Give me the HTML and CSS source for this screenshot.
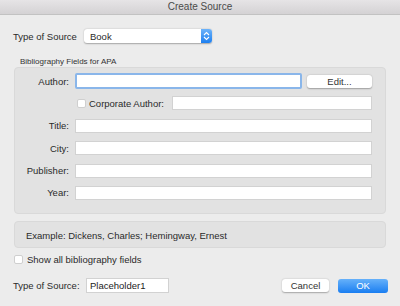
FILE: index.html
```html
<!DOCTYPE html>
<html lang="en">
<head>
    <meta charset="UTF-8">
    <title>Create Source</title>
    <link rel="stylesheet" href="styles.css">
</head>
<body>
    <div class="window">
        <header class="titlebar">Create Source</header>
        <main class="content">
            <div class="type-row">
                <label class="type-label">Type of Source</label>
                <div class="select">
                    <span>Book</span>
                    <span class="stepper">
                        <svg width="7" height="10" viewBox="0 0 7 10">
                            <path d="M1 4 L3.5 1.5 L6 4 M1 6 L3.5 8.5 L6 6" fill="none" stroke="#fff" stroke-width="1.1"/>
                        </svg>
                    </span>
                </div>
            </div>

            <div class="group-title">Bibliography Fields for APA</div>
            <div class="group">
                <label class="field-label">Author:</label>
                <div class="author-row">
                    <input type="text" class="field focused">
                    <button class="btn edit-btn">Edit...</button>
                </div>

                <span></span>
                <div class="corp-row">
                    <span class="checkbox"></span>
                    <span class="corp-label">Corporate Author:</span>
                    <input type="text" class="field">
                </div>

                <label class="field-label">Title:</label>
                <input type="text" class="field">

                <label class="field-label">City:</label>
                <input type="text" class="field">

                <label class="field-label">Publisher:</label>
                <input type="text" class="field">

                <label class="field-label">Year:</label>
                <input type="text" class="field">
            </div>

            <div class="example">Example: Dickens, Charles; Hemingway, Ernest</div>

            <div class="show-all">
                <span class="checkbox"></span>
                <span>Show all bibliography fields</span>
            </div>

            <footer class="bottom-row">
                <label class="tag-label">Type of Source:</label>
                <input type="text" class="field tag-input" value="Placeholder1">
                <span class="spacer"></span>
                <button class="btn cancel-btn">Cancel</button>
                <button class="btn ok-btn">OK</button>
            </footer>
        </main>
    </div>
</body>
</html>
```

FILE: styles.css
```css
body {
    margin: 0;
    background-color: #ececec;
    font-family: "Liberation Sans", Arial, sans-serif;
    font-size: 9.5px;
    color: #2a2a2a;
}
.window {
    width: 400px;
    height: 306px;
    overflow: hidden;
    background-color: #ececec;
}
.titlebar {
    height: 15px;
    line-height: 14px;
    text-align: center;
    font-size: 10px;
    color: #4a4a4a;
    background: linear-gradient(#e6e4e6, #d4d2d4);
    border-bottom: 1px solid #c2c2c2;
    box-sizing: border-box;
}
.content {
    padding: 0 13px 0 13px;
}
.type-row {
    display: flex;
    align-items: center;
    margin-top: 14px;
    height: 14px;
}
.type-label {
    width: 71px;
}
.select {
    width: 128px;
    height: 14px;
    background-color: #fff;
    border-radius: 3px;
    box-shadow: 0 0.5px 1.5px rgba(0, 0, 0, 0.3);
    display: flex;
    align-items: center;
    justify-content: space-between;
    padding-left: 6px;
    box-sizing: border-box;
}
.stepper {
    width: 11px;
    height: 14px;
    background: linear-gradient(#6cb3fa, #1d7ff0);
    border-radius: 0 3px 3px 0;
    display: flex;
    align-items: center;
    justify-content: center;
}
.group-title {
    font-size: 8px;
    color: #333;
    margin: 13px 0 0 7px;
    height: 11px;
    line-height: 11px;
}
.group {
    margin-left: 1px;
    width: 372px;
    height: 147px;
    box-sizing: border-box;
    background-color: #e2e2e2;
    border: 1px solid #d9d9d9;
    border-radius: 4px;
    padding: 6px 13px 0 0;
    display: grid;
    grid-template-columns: 54px 1fr;
    column-gap: 6px;
    grid-auto-rows: 14px;
    row-gap: 8.4px;
    align-items: center;
}
.field-label {
    text-align: right;
}
.field {
    height: 14px;
    box-sizing: border-box;
    border: 1px solid #d2d2d2;
    background-color: #fff;
    margin: 0;
    padding: 0 3px;
    font-family: inherit;
    font-size: 9.5px;
    color: #222;
    width: 100%;
}
.field.focused {
    height: 16px;
    border: 2px solid #8ab6ea;
    border-radius: 2px;
}
.author-row {
    display: flex;
    align-items: center;
    gap: 5px;
}
.btn {
    font-family: inherit;
    font-size: 9.5px;
    border: none;
    border-radius: 3px;
    padding: 0;
    margin: 0;
    cursor: pointer;
}
.edit-btn {
    flex: 0 0 65px;
    height: 13px;
    background-color: #fff;
    color: #333;
    box-shadow: 0 0.5px 1.5px rgba(0, 0, 0, 0.3);
}
.corp-row {
    display: flex;
    align-items: center;
}
.checkbox {
    width: 9px;
    height: 9px;
    box-sizing: border-box;
    background-color: #fff;
    border: 1px solid #cfcfcf;
    border-radius: 2px;
    flex: 0 0 9px;
}
.corp-row .checkbox {
    margin-left: 2px;
}
.corp-label {
    margin-left: 3px;
    width: 83px;
}
.corp-row .field {
    flex: 1;
}
.example {
    margin: 7px 0 0 1px;
    width: 372px;
    height: 27px;
    line-height: 27px;
    box-sizing: border-box;
    padding-left: 11px;
    background-color: #e2e2e2;
    border: 1px solid #d9d9d9;
    border-radius: 4px;
}
.show-all {
    display: flex;
    align-items: center;
    gap: 4px;
    margin: 7px 0 0 1px;
    height: 9px;
}
.bottom-row {
    display: flex;
    align-items: center;
    margin-top: 14px;
    height: 15px;
}
.tag-label {
    width: 73px;
}
.tag-input {
    width: 83px;
    height: 15px;
}
.spacer {
    flex: 1;
}
.cancel-btn {
    width: 47px;
    height: 13px;
    background-color: #fff;
    color: #333;
    box-shadow: 0 0.5px 1.5px rgba(0, 0, 0, 0.3);
}
.ok-btn {
    width: 50px;
    height: 14px;
    margin-left: 9px;
    margin-right: -1px;
    color: #fff;
    background: linear-gradient(#66b1fa, #1a7ef1);
}
```
